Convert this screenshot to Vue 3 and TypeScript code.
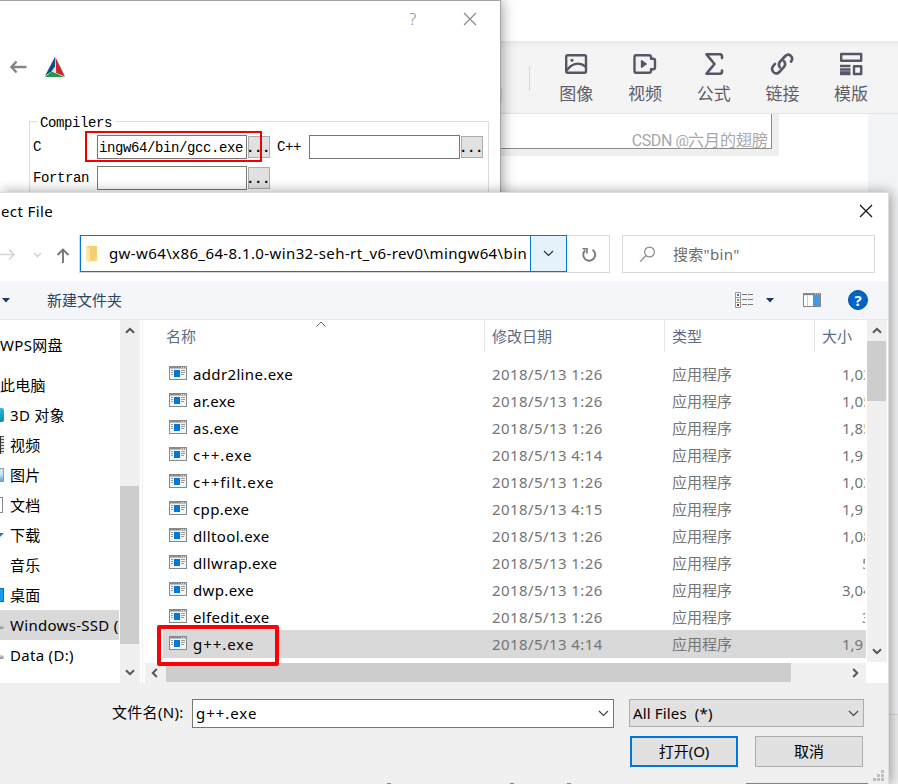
<script setup lang="ts">
interface FileRow { name: string; date: string; size: string; selected?: boolean }
interface NavItem { label: string; kind: string; root?: boolean; gap?: boolean; selected?: boolean }

const files: FileRow[] = [
  { name: 'addr2line.exe', date: '2018/5/13 1:26', size: '1,03' },
  { name: 'ar.exe', date: '2018/5/13 1:26', size: '1,05' },
  { name: 'as.exe', date: '2018/5/13 1:26', size: '1,85' },
  { name: 'c++.exe', date: '2018/5/13 4:14', size: '1,91' },
  { name: 'c++filt.exe', date: '2018/5/13 1:26', size: '1,03' },
  { name: 'cpp.exe', date: '2018/5/13 4:15', size: '1,91' },
  { name: 'dlltool.exe', date: '2018/5/13 1:26', size: '1,08' },
  { name: 'dllwrap.exe', date: '2018/5/13 1:26', size: '5' },
  { name: 'dwp.exe', date: '2018/5/13 1:26', size: '3,04' },
  { name: 'elfedit.exe', date: '2018/5/13 1:26', size: '3' },
  { name: 'g++.exe', date: '2018/5/13 4:14', size: '1,91', selected: true },
]

const nav: NavItem[] = [
  { label: 'WPS网盘', kind: 'none', root: true, gap: true },
  { label: '此电脑', kind: 'none', root: true },
  { label: '3D 对象', kind: 'cube' },
  { label: '视频', kind: 'film' },
  { label: '图片', kind: 'photo' },
  { label: '文档', kind: 'doc' },
  { label: '下载', kind: 'down' },
  { label: '音乐', kind: 'none' },
  { label: '桌面', kind: 'desk' },
  { label: 'Windows-SSD (', kind: 'disk', selected: true },
  { label: 'Data (D:)', kind: 'disk' },
]

const tools = [
  { label: '图像', icon: 'image' },
  { label: '视频', icon: 'video' },
  { label: '公式', icon: 'sigma' },
  { label: '链接', icon: 'link' },
  { label: '模版', icon: 'template' },
]
</script>

<template>
  <div class="screen">
    <div class="page">
      <div class="page-top"></div>
      <div class="editor-bar">
        <div class="bar-sep"></div>
        <div v-for="t in tools" :key="t.icon" class="tool">
          <svg class="tool-icon" width="24" height="24" viewBox="0 0 24 24" fill="none" stroke="#555666" stroke-width="2.400" stroke-linejoin="round" stroke-linecap="round">
            <template v-if="t.icon === 'image'">
              <rect x="2.200" y="3.200" width="19.800" height="17.600" rx="1.500" />
              <path d="M2.500 18.500C8 11.500 15 9.500 21.500 14.500" />
              <circle cx="8" cy="8.300" r="1.500" fill="#555666" stroke="none" />
            </template>
            <template v-else-if="t.icon === 'video'">
              <path d="M3 3.200H16Q18 3.200 18 5V6.800H20Q22 6.800 22 8.500V15.500Q22 17.200 20 17.200H18V19Q18 20.800 16 20.800H3Q1.500 20.800 1.500 19V5Q1.500 3.200 3 3.200Z" />
              <path d="M8.600 8.800V15.200L13.200 12Z" fill="#555666" stroke-width="1.500" />
            </template>
            <path v-else-if="t.icon === 'sigma'" d="M20 6V4.500Q20 2.300 17.800 2.300H4.500L12.500 12L4.500 21.700H17.800Q20 21.700 20 19.500V18.500" stroke-width="2.600" />
            <g v-else-if="t.icon === 'link'" stroke-width="2.600">
              <path d="M9.800 15.300Q7.800 12 10.200 9.500L15.300 4Q18 1.400 20.700 3.700Q23.500 6.400 21 9.600" />
              <path d="M5 11.900L3.200 14Q.7 17.300 3.500 20.200Q6.700 22.800 9.300 20L14 14.900Q16.300 12.200 13.900 9" />
            </g>
            <template v-else>
              <rect x="2.200" y="2" width="20" height="6.800" />
              <path d="M1 14H11.500M1 17.500H11.500" stroke-linecap="butt" />
              <path d="M1 21.200H11.500" stroke-width="4" stroke-linecap="butt" />
              <rect x="15" y="14.200" width="7.200" height="7.800" />
            </template>
          </svg>
          <span class="tool-label">{{ t.label }}</span>
        </div>
      </div>
      <div class="page-body">
        <div class="article">
          <div class="shot"><div class="shot-inner"><span class="watermark"><span class="wm-latin">CSDN </span><span class="wm-at">@</span>六月的翅膀</span></div></div>
        </div>
        <div class="margin-col"></div>
      </div>
    </div>
    <div class="edge-glyph"></div>
    <div class="side-panel"></div>

    <div class="cmake">
      <div class="cmake-title">
        <span class="help">?</span>
        <svg width="14" height="14" viewBox="0 0 14 14" stroke="#888" stroke-width="1.100"><path d="M1 1L13 13M13 1L1 13" /></svg>
      </div>
      <div class="cmake-head">
        <svg width="17" height="14" viewBox="0 0 17 14" fill="none" stroke="#858585" stroke-width="2.400"><path d="M16.500 7H2M6.500 1.500L1.500 7L6.500 12.500" /></svg>
        <svg width="20" height="20" viewBox="0 0 20 20">
          <path d="M10 8.500L11.500 16L6 14.500Z" fill="#dce0e6" />
          <path d="M9.900 0L0 19L6.500 14.300L10 9.500Z" fill="#064f8c" />
          <path d="M10.400 0L20 19.500L11.200 16Z" fill="#cf2530" />
          <path d="M0 20L6.500 14.500L19.500 20Z" fill="#249847" />
        </svg>
      </div>
      <fieldset class="group">
        <legend>Compilers</legend>
        <div class="comp-row">
          <span class="comp-label">C</span><span class="field">ingw64/bin/gcc.exe</span><span class="dots">...</span>
          <span class="cpp-label">C++</span><span class="field"></span><span class="dots">...</span>
        </div>
        <div class="comp-row">
          <span class="comp-label">Fortran</span><span class="field"></span><span class="dots">...</span>
        </div>
      </fieldset>
      <div class="mark mark-gcc"></div>
    </div>

    <div class="dialog">
      <header class="dlg-title">
        <span>ect File</span>
        <svg width="14" height="14" viewBox="0 0 14 14" stroke="#111" stroke-width="1.200"><path d="M1 1L13 13M13 1L1 13" /></svg>
      </header>
      <div class="nav-row">
        <svg class="arrows" width="80" height="38" viewBox="0 0 80 38" fill="none">
          <path d="M0 19.500H14M9 14.500L14 19.500L9 24.500" stroke="#d5d5d5" stroke-width="1.700" />
          <path d="M34 18L37.500 21.500L41 18" stroke="#d5d5d5" stroke-width="1.600" />
          <path d="M63 28V15M57.500 20L63 14.500L68.500 20" stroke="#777" stroke-width="1.900" />
        </svg>
        <div class="addr-shell">
          <div class="address">
            <svg class="folder" width="14" height="18" viewBox="0 0 14 18"><path d="M2 1H12V16H2Z" fill="#f5d06e" /><path d="M1 1L5 3V17.500L1 16Z" fill="#ffe9a8" /><path d="M10 12H12.500V16H10Z" fill="#fbdc85" /></svg>
            <span class="path">gw-w64\x86_64-8.1.0-win32-seh-rt_v6-rev0\mingw64\bin</span>
            <span class="drop"><svg width="11" height="7" viewBox="0 0 11 7" fill="none" stroke="#333" stroke-width="1.200"><path d="M1 1L5.500 5.500L10 1" /></svg></span>
          </div>
          <svg class="refresh" width="16" height="16" viewBox="0 0 16 16" fill="none" stroke="#7a7a7a" stroke-width="1.900"><path d="M11.500 2.700A6 6 0 1 1 4.300 3.200" /><path d="M1.500 1.800H6V6.500" stroke-width="1.600" /></svg>
        </div>
        <div class="search">
          <svg width="17" height="17" viewBox="0 0 17 17" fill="none" stroke="#8a8a8a" stroke-width="1.200"><circle cx="10.500" cy="6" r="4.900" /><path d="M7 9.500L1 15.800" /></svg>
          <span>搜索"bin"</span>
        </div>
      </div>
      <div class="command-bar">
        <svg width="8" height="5" viewBox="0 0 8 5"><path d="M0 0H8L4 4.500Z" fill="#1d3a66" /></svg>
        <span class="new-folder">新建文件夹</span>
        <svg class="view-icon" width="19" height="16" viewBox="0 0 19 16">
          <path d="M.5 .5H5.500V15.500H.5ZM.5 5.500H5.500M.5 10.500H5.500" fill="#fff" stroke="#999" />
          <path d="M2 2H4V4H2Z" fill="#2482d0" /><path d="M2 7H4V9H2Z" fill="#8b8731" /><path d="M2 12H4V14H2Z" fill="#c12020" />
          <path d="M7 2.500H12M13 2.500H18M7 7.500H12M13 7.500H18M7 12.500H12M13 12.500H18" stroke="#777" />
        </svg>
        <svg class="view-drop" width="8" height="5" viewBox="0 0 8 5"><path d="M0 0H8L4 4.500Z" fill="#1d3a66" /></svg>
        <svg class="pane-icon" width="18" height="14" viewBox="0 0 18 14">
          <path d="M.5 .5H17.500V13.500H.5Z" fill="#fff" stroke="#858585" /><path d="M0 0H18V2.200H0Z" fill="#858585" /><path d="M12 1H13M14 1H15M16 1H17" stroke="#ddd" />
          <path d="M4.500 2V13" stroke="#ccc" /><path d="M10 2H17V13H10Z" fill="#3d9be8" />
        </svg>
        <span class="help-badge">?</span>
      </div>
      <div class="browser">
        <nav class="tree">
          <div v-for="n in nav" :key="n.label" class="tree-item" :class="{ root: n.root, gap: n.gap, selected: n.selected }">
            <span v-if="!n.root" class="tree-icon" :class="n.kind"></span>{{ n.label }}
          </div>
        </nav>
        <div class="vbar tree-bar">
          <svg width="10" height="7" viewBox="0 0 10 7" fill="none" stroke="#555" stroke-width="2"><path d="M1 5.800L5 1.800L9 5.800" /></svg>
          <div class="thumb tree-thumb"></div>
          <svg width="10" height="7" viewBox="0 0 10 7" fill="none" stroke="#555" stroke-width="2"><path d="M1 1.200L5 5.200L9 1.200" /></svg>
        </div>
        <div class="list">
          <div class="list-main">
            <div class="list-content">
              <div class="columns">
                <span class="col c-name">名称</span><span class="col c-date">修改日期</span><span class="col c-type">类型</span><span class="col c-size">大小</span>
                <svg class="sort" width="10" height="6" viewBox="0 0 10 6" fill="none" stroke="#666"><path d="M.5 5.500L5 1L9.500 5.500" /></svg>
              </div>
              <div class="rows">
                <div v-for="f in files" :key="f.name" class="row" :class="{ selected: f.selected }">
                  <svg class="exe" width="18" height="14" viewBox="0 0 18 14">
                    <rect x=".5" y=".5" width="17" height="13" fill="#f4f5f6" stroke="#858a8f" /><path d="M0 0H18V2.500H0Z" fill="#858a8f" />
                    <path d="M12 1.500H13M14 1.500H15M16 1.500H17" stroke="#ddd" />
                    <rect x="5" y="4" width="6" height="7" fill="#0078d7" /><path d="M2 4.500H4M2 6.500H4M2 8.500H4M12 4.500H16M12 6.500H16M12 8.500H15" stroke="#999" />
                  </svg>
                  <span class="f-name" :class="{ plus: f.name.includes('++') }">{{ f.name }}</span><span class="f-date">{{ f.date }}</span><span class="f-type">应用程序</span>
                  <span class="f-size" :class="{ short: f.size.length === 1 }">{{ f.size }}</span>
                </div>
              </div>
            </div>
            <div class="vbar list-bar">
              <svg width="10" height="7" viewBox="0 0 10 7" fill="none" stroke="#555" stroke-width="2"><path d="M1 5.800L5 1.800L9 5.800" /></svg>
              <div class="thumb list-thumb"></div>
              <svg width="10" height="7" viewBox="0 0 10 7" fill="none" stroke="#555" stroke-width="2"><path d="M1 1.200L5 5.200L9 1.200" /></svg>
            </div>
          </div>
          <div class="hbar">
            <svg width="7" height="10" viewBox="0 0 7 10" fill="none" stroke="#555" stroke-width="2"><path d="M5.800 1L1.800 5L5.800 9" /></svg>
            <div class="hthumb"></div>
            <svg width="7" height="10" viewBox="0 0 7 10" fill="none" stroke="#555" stroke-width="2"><path d="M1.200 1L5.200 5L1.200 9" /></svg>
          </div>
        </div>
      </div>
      <footer class="footer">
        <div class="name-row">
          <label>文件名(N):</label>
          <div class="file-input"><span class="plus">g++.exe</span><svg width="11" height="7" viewBox="0 0 11 7" fill="none" stroke="#444" stroke-width="1.200"><path d="M1 1L5.500 5.500L10 1" /></svg></div>
          <div class="filter"><span>All Files&nbsp; (*)</span><svg width="11" height="7" viewBox="0 0 11 7" fill="none" stroke="#444" stroke-width="1.200"><path d="M1 1L5.500 5.500L10 1" /></svg></div>
        </div>
        <div class="buttons"><button class="primary">打开(O)</button><button>取消</button></div>
      </footer>
      <svg class="grip" width="11" height="11" viewBox="0 0 11 11" fill="#bcbcbc"><path d="M8 0H11V3H8ZM4 4H7V7H4ZM8 4H11V7H8ZM0 8H3V11H0ZM4 8H7V11H4ZM8 8H11V11H8Z" /></svg>
      <div class="mark mark-gpp"></div>
    </div>
    <div class="bottom-strip"><i class="dot d1"></i><i class="dot d2"></i><i class="dot d3"></i><i class="publish"></i></div>
  </div>
</template>

<style>
html, body { margin: 0; overflow: hidden; background: #fff; }
</style>

<style scoped>
* { box-sizing: border-box; }
.screen { position: relative; width: 898px; height: 784px; overflow: hidden; font: 15px/20px "Noto Sans", "Noto Sans CJK SC", sans-serif; color: #000; }
svg { display: block; flex: none; }
span { white-space: nowrap; }

.page { height: 784px; display: flex; flex-direction: column; background: #fff; }
.page-top { height: 41px; }
.editor-bar { height: 73px; padding-left: 529px; display: flex; background: linear-gradient(#e9e9e9, #f4f4f4 7px); border-bottom: 1px solid #e3e3e3; }
.bar-sep { width: 1px; height: 25px; margin: 25px 12px 0 0; background: #d8d8d8; }
.tool { width: 68.700px; padding-top: 11px; display: flex; flex-direction: column; align-items: center; }
.tool-label { margin-top: 5px; font: 17px/24px "Noto Sans CJK SC", sans-serif; color: #5c5d6c; }
.page-body { flex: 1; display: flex; }
.article { width: 868px; }
.margin-col { flex: 1; background: #f3f4f7; }
.shot { width: 779px; height: 42px; background: #efefef; }
.shot-inner { width: 772px; height: 35px; background: #fff; border: solid #8b8b8b; border-width: 0 1px 1px 0; display: flex; justify-content: flex-end; align-items: flex-end; padding-right: 3px; }
.watermark { font: 16px/20px "Liberation Sans", "Noto Sans CJK SC", sans-serif; color: #a8a8a8; height: 17px; }
.wm-latin { font: 16px/20px Roboto, sans-serif; letter-spacing: -.4px; }
.wm-at { font: 15px/20px Roboto, sans-serif; margin-right: -1px; }
.edge-glyph { position: absolute; left: 500px; top: 88px; width: 2px; height: 14px; border-right: 1px solid #cbdce6; background: #8dbad2; }
.side-panel { position: absolute; left: 868px; top: 714px; width: 30px; height: 70px; background: #f1f1f1; border-top: 1px solid #ddd; }

.cmake { position: absolute; left: 0; top: 0; width: 501px; height: 260px; background: #fff; border: solid #a4a4a4; border-width: 1px 1px 0 0; box-shadow: 2px 0 12px rgba(0,0,0,.35); font: 14px/20px "Liberation Mono", monospace; letter-spacing: -.4px; }
.cmake-title { height: 36px; display: flex; justify-content: flex-end; align-items: center; padding: 0 23px 0 0; }
.help { font: 300 16px/20px "Noto Sans", sans-serif; color: #888; margin-right: 47px; }
.cmake-head { display: flex; align-items: center; gap: 18px; height: 55px; padding: 5px 0 0 10px; }
.group { margin: 20px 11px 0 29px; height: 160px; padding: 1px 0 0 3px; border: 1px solid #dcdcdc; min-width: 0; }
.group legend { margin-left: 4px; padding: 0 4px 0 3px; height: 18px; line-height: 22px; }
.comp-row { display: flex; align-items: center; height: 31px; }
.comp-label { width: 64px; line-height: 22px; }
.field { width: 151px; height: 24px; border: 1px solid #777; padding-left: 1px; line-height: 25px; background: #fff; }
.dots { width: 22px; height: 22px; margin-left: 0; border: 1px solid #adadad; background: #e1e1e1; line-height: 22px; font-weight: bold; text-indent: -3px; }
.cpp-label { width: 32px; margin-left: 7px; line-height: 22px; }
.field + .dots { margin-left: 1px; }
.comp-row .field:nth-child(2) { width: 150px; }

.mark { position: absolute; pointer-events: none; }
.mark-gcc { left: 85px; top: 130px; width: 177px; height: 31px; border: 2px solid #f20000; }
.mark-gpp { left: 157px; top: 432px; width: 122px; height: 41px; border: 4px solid #fb0007; border-radius: 2px; }

.dialog { position: absolute; left: 0; top: 193px; width: 888px; height: 590px; background: #fff; box-shadow: 0 0 0 1px #dedede, 2px 0 12px 1px rgba(0,0,0,.37); display: flex; flex-direction: column; }
.dlg-title { height: 42px; display: flex; justify-content: space-between; align-items: flex-start; padding: 8px 15px 0 1px; line-height: 21px; letter-spacing: .4px; }
.dlg-title svg { margin-top: 3px; }
.nav-row { height: 38px; display: flex; }
.arrows { margin-right: -1px; }
.addr-shell { width: 531px; border: 1px solid #d9d9d9; display: flex; align-items: center; }
.address { margin: -1px 0 0 0; width: 487px; height: 37px; align-self: flex-start; border: 1px solid #0078d7; display: flex; align-items: center; background: #fff; flex: none; }
.folder { margin-left: 4px; }
.path { width: 421px; margin-left: 10px; letter-spacing: .39px; line-height: 19px; margin-top: -1px; }
.drop { flex: 1; align-self: stretch; border-left: 1px solid #0078d7; background: #e5f1fb; display: flex; align-items: center; justify-content: center; }
.refresh { margin: 2px 0 0 14px; }
.search { width: 253px; margin-left: 12px; border: 1px solid #d9d9d9; display: flex; align-items: center; padding-left: 16px; color: #6d6d6d; letter-spacing: .3px; }
.search span { margin-left: 17px; }
.command-bar { height: 39px; margin-top: 8px; display: flex; align-items: center; padding-left: 2px; background: #f4f6f9; border-bottom: 1px solid #e6e8ea; color: #2a4466; }
.new-folder { margin-left: 37px; }
.view-icon { margin-left: 613px; }
.view-drop { margin-left: 12px; }
.pane-icon { margin-left: 29px; }
.help-badge { width: 20px; height: 20px; margin-left: 27px; border-radius: 50%; background: #0064c8; border: 1px solid #07539b; color: #fff; font: bold 15px/18px "Noto Sans", sans-serif; text-align: center; }
.browser { height: 363px; display: flex; }
.tree { width: 119px; padding-top: 10px; overflow: hidden; letter-spacing: .3px; }
.tree-item { height: 30px; line-height: 30px; display: flex; align-items: center; padding-left: 10px; white-space: nowrap; position: relative; }
.tree-item.root { padding-left: 0; }
.tree-item.gap { margin-bottom: 10px; }
.tree-item.selected { background: #d9d9d9; }
.tree-icon { width: 4px; height: 14px; margin: 0 6px 0 -10px; }
.cube { background: linear-gradient(#31b9db, #068db4); border-radius: 0 2px 2px 0; }
.film { background: repeating-linear-gradient(#555 0 1px, #ddd 1px 3px); border-left: 1px solid #333; height: 18px; }
.photo { background: linear-gradient(#cfe7f8 40%, #62a5d9); border: 1px solid #999; border-left: 0; }
.doc { width: 3px; margin-right: 7px; height: 16px; border: 1px solid #888; border-left: 0; }
.down { width: 0; height: 0; margin-right: 6px; border-top: 4px solid #2878b9; border-right: 4px solid transparent; }
.desk { background: #149cf0; border: 1px solid #0875bb; border-left: 0; }
.disk { height: 4px; background: linear-gradient(#ddd, #888); transform: translateY(2px); border-radius: 0 2px 2px 0; }
.vbar { display: flex; flex-direction: column; align-items: center; background: #f0f0f0; }
.thumb { width: 100%; background: #cdcdcd; }
.tree-bar { width: 20px; margin-left: 1px; padding: 7px 1px 7px 0; }
.tree-thumb { height: 158px; margin: 152px 0 25px; }
.list { flex: 1; margin-left: 2px; border-left: 1px solid #ededed; padding-left: 2px; display: flex; flex-direction: column; }
.list-main { height: 342px; display: flex; }
.list-content { width: 721px; overflow: hidden; }
.columns { position: relative; height: 32px; display: flex; color: #5b6d86; line-height: 33px; }
.col { border-right: 1px solid #e5e5e5; }
.c-name { width: 340px; padding-left: 21px; }
.c-date { width: 180px; padding-left: 7px; }
.c-type { width: 150px; padding-left: 7px; }
.c-size { flex: 1; padding-left: 7px; border: 0; }
.sort { position: absolute; left: 171px; top: 1px; }
.rows { padding: 9px 0 0 18px; }
.row { height: 27px; display: flex; line-height: 27px; padding-left: 6px; }
.row.selected { height: 28px; margin-top: -1px; line-height: 29px; background: #d9d9d9; }
.exe { margin-top: 5px; }
.row.selected .exe { margin-top: 6px; }
.f-name { width: 299px; margin-left: 6px; letter-spacing: .35px; }
.plus { letter-spacing: .95px; }
.f-date { width: 180px; color: #757575; letter-spacing: .42px; }
.f-type { width: 170px; color: #757575; }
.f-size { width: 23px; color: #757575; overflow: hidden; }
.f-size.short { width: 3px; margin-left: 20px; }
.list-bar { width: 20px; margin-left: 1px; padding: 7px 1px 6px 0; }
.list-thumb { height: 60px; margin: 7px 0 247px; }
.hbar { height: 20px; width: 721px; margin-top: 1px; display: flex; align-items: center; background: #f0f0f0; padding-left: 6px; }
.hthumb { width: 625px; height: 19px; align-self: flex-start; margin: 0 61px 0 8px; background: #cdcdcd; }
.footer { flex: 1; background: #f0f0f0; padding: 16px 24px 0 112px; }
.name-row { height: 30px; display: flex; line-height: 27px; align-items: flex-start; }
.name-row label { width: 80px; white-space: nowrap; letter-spacing: .3px; }
.file-input { width: 422px; height: 29px; border: 1px solid #777; background: #fff; padding: 0 4px 0 3px; display: flex; align-items: center; justify-content: space-between; }
.filter { width: 235px; height: 28px; margin-left: 15px; border: 1px solid #adadad; background: #e1e1e1; padding: 0 4px 0 3px; display: flex; align-items: center; justify-content: space-between; letter-spacing: .15px; }
.buttons { display: flex; justify-content: flex-end; gap: 17px; margin-top: 7px; padding-right: 1px; }
.buttons button { width: 108px; height: 31px; padding: 0 0 2px; border: 1px solid #adadad; background: #e1e1e1; font: inherit; color: #000; }
.buttons .primary { border: 2px solid #0078d7; }
.grip { position: absolute; right: 4px; bottom: 2px; }
.bottom-strip { position: absolute; left: 0; top: 783px; width: 888px; height: 1px; background: #efefef; }
.dot { position: absolute; width: 4px; height: 1px; background: #888; }
.d1 { left: 387px; }
.d2 { left: 510px; }
.d3 { left: 567px; }
.publish { position: absolute; left: 746px; width: 122px; height: 1px; background: #fc5531; }
</style>
